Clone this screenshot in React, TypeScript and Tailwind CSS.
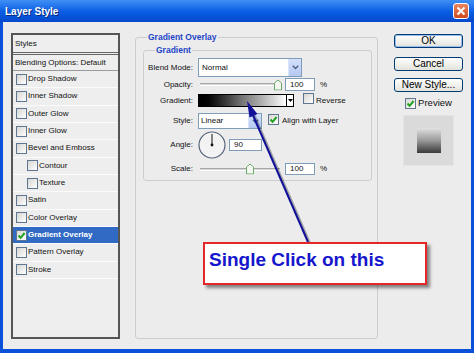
import React from "react";

const styleRows = [
  { label: "Drop Shadow" },
  { label: "Inner Shadow" },
  { label: "Outer Glow" },
  { label: "Inner Glow" },
  { label: "Bevel and Emboss" },
  { label: "Contour", indent: true },
  { label: "Texture", indent: true },
  { label: "Satin" },
  { label: "Color Overlay" },
  { label: "Gradient Overlay", selected: true },
  { label: "Pattern Overlay" },
  { label: "Stroke" },
];

function Check({ checked = false }: { checked?: boolean }) {
  return (
    <span className="inline-flex w-[11px] h-[11px] shrink-0 border border-[#5f7590] bg-gradient-to-br from-[#d6d6d2] to-white items-center justify-center">
      {checked && (
        <svg width="9" height="9" viewBox="0 0 9 9">
          <path d="M1.5 4.5 L3.6 6.8 L7.6 2" stroke="#22a322" strokeWidth="2" fill="none" />
        </svg>
      )}
    </span>
  );
}

function Chevron() {
  return (
    <span className="flex w-[13px] h-full items-center justify-center bg-gradient-to-b from-[#d4e0fb] to-[#b6c9f4] border-l border-[#dbe5fa]">
      <svg width="7" height="5" viewBox="0 0 7 5">
        <path d="M0.8 0.8 L3.5 3.6 L6.2 0.8" stroke="#4d6185" strokeWidth="1.4" fill="none" />
      </svg>
    </span>
  );
}

function Slider({ value }: { value: number }) {
  return (
    <div className="relative w-[84px] h-full flex items-center px-[2px]">
      <div className="flex-1 h-[3px] border-t border-[#a7a7a7] border-b border-b-white bg-[#d8d8d8]" />
      <svg className="absolute top-1/2 -translate-y-1/2" style={{ left: value }} width="8" height="11" viewBox="0 0 8 11">
        <path d="M0.5 10.5 V3.5 L4 0.5 L7.5 3.5 V10.5 Z" fill="#f4f8f0" stroke="#6aa76a" />
      </svg>
    </div>
  );
}

function Field({ value, w }: { value: string; w: string }) {
  return (
    <div className={`${w} h-full border border-[#7f9db9] bg-white flex items-center pl-[4px] text-[8px] leading-none`}>{value}</div>
  );
}

function Row({ label, className, children }: { label: string; className: string; children: React.ReactNode }) {
  return (
    <div className={`flex items-center ${className}`}>
      <span className="w-[49px] mr-[5px] text-right">{label}</span>
      {children}
    </div>
  );
}

function Button({ label, def = false }: { label: string; def?: boolean }) {
  return (
    <div
      className={`w-[69px] h-[14px] rounded-[3px] border border-[#003c74] bg-gradient-to-b from-white to-[#e3e3dd] flex items-center justify-center text-[10px] leading-none text-black ${
        def ? "shadow-[inset_0_0_0_1px_#9bbcf0]" : ""
      }`}
    >
      {label}
    </div>
  );
}

export default function App() {
  return (
    <div className="relative w-[474px] h-[353px] bg-[#0a50d8] flex flex-col overflow-hidden font-['Liberation_Sans',Arial,sans-serif] text-[8px] text-[#111]">
      {/* title bar */}
      <div className="h-[22px] flex items-center bg-gradient-to-b from-[#3f8ff5] via-[#0b5fe4] to-[#0448cc]">
        <span className="pl-[5px] text-white font-bold text-[10px] [text-shadow:1px_1px_0_#0a2a80]">Layer Style</span>
        <div className="ml-auto mr-[5px] w-[16px] h-[16px] rounded-[3px] border border-white bg-gradient-to-b from-[#ec8460] to-[#d0471c] flex items-center justify-center">
          <svg width="10" height="10" viewBox="0 0 10 10">
            <path d="M1.5 1.5 L8.5 8.5 M8.5 1.5 L1.5 8.5" stroke="white" strokeWidth="2" />
          </svg>
        </div>
      </div>

      {/* body */}
      <div className="mx-[3px] h-[327px] bg-[#ececec] flex items-start pl-[8px] pt-[10px]">
        {/* styles list */}
        <div className="mt-[1px] w-[109px] h-[306px] border-2 border-[#555] bg-[#eeeeee] flex flex-col">
          <div className="h-[20px] flex items-center pl-[2px] border-b-[3px] border-double border-[#666]">Styles</div>
          <div className="h-[16px] flex items-center pl-[2px] border-b border-[#9a9a9a]">Blending Options: Default</div>
          {styleRows.map((r) => (
            <div
              key={r.label}
              className={`h-[17.33px] flex items-center gap-[1px] border-b border-[#fbfbfb] ${r.indent ? "pl-[14px]" : "pl-[3px]"} ${
                r.selected ? "bg-[#316ac5] text-white font-bold" : ""
              }`}
            >
              <Check checked={r.selected} />
              <span>{r.label}</span>
            </div>
          ))}
        </div>

        {/* gradient overlay group */}
        <fieldset className="ml-[15px] w-[243px] h-[307px] border border-[#cdcdcd] rounded-[3px]">
          <legend className="ml-[11px] px-[1px] text-[8.5px] leading-[10px] font-bold text-[#1f45c8]">Gradient Overlay</legend>
          <fieldset className="ml-[7px] mt-[3px] w-[229px] border border-[#cdcdcd] rounded-[3px] pb-[5px]">
            <legend className="ml-[11px] px-[1px] text-[8.5px] leading-[10px] font-bold text-[#1f45c8]">Gradient</legend>

            <Row label="Blend Mode:" className="mt-[3px] h-[19px]">
              <div className="w-[104px] h-full border border-[#7f9db9] bg-white flex items-center">
                <span className="pl-[3px] flex-1">Normal</span>
                <Chevron />
              </div>
            </Row>

            <Row label="Opacity:" className="mt-[1px] h-[13px]">
              <Slider value={76} />
              <div className="ml-[3px] h-full flex items-center">
                <Field value="100" w="w-[30px]" />
              </div>
              <span className="ml-[5px]">%</span>
            </Row>

            <Row label="Gradient:" className="mt-[3px] h-[13px]">
              <div className="w-[96px] h-full border border-black flex">
                <div className="flex-1 bg-gradient-to-r from-black via-[#777] to-white" />
                <div className="w-[7px] bg-white border-l border-black flex items-center justify-center">
                  <svg width="5" height="3" viewBox="0 0 5 3">
                    <path d="M0 0 H5 L2.5 3 Z" fill="black" />
                  </svg>
                </div>
              </div>
              <span className="ml-[9px]">
                <Check />
              </span>
              <span className="ml-[2px]">Reverse</span>
            </Row>

            <Row label="Style:" className="mt-[6px] h-[16px]">
              <div className="w-[64px] h-full border border-[#7f9db9] bg-white flex items-center">
                <span className="pl-[2px] flex-1">Linear</span>
                <Chevron />
              </div>
              <span className="ml-[6px]">
                <Check checked />
              </span>
              <span className="ml-[3px]">Align with Layer</span>
            </Row>

            <Row label="Angle:" className="mt-[3px] h-[26px]">
              <svg width="28" height="28" viewBox="0 0 28 28">
                <circle cx="14" cy="14" r="13" fill="#f3f3f3" stroke="#56657c" strokeWidth="1.2" />
                <line x1="14" y1="14" x2="14" y2="3" stroke="#111" strokeWidth="1" />
                <circle cx="14" cy="14" r="1.4" fill="#111" />
              </svg>
              <div className="ml-[3px] h-[12px] flex items-center">
                <Field value="90" w="w-[33px]" />
              </div>
            </Row>

            <Row label="Scale:" className="mt-[5px] h-[12px]">
              <Slider value={48} />
              <div className="ml-[3px] h-full flex items-center">
                <Field value="100" w="w-[30px]" />
              </div>
              <span className="ml-[5px]">%</span>
            </Row>
          </fieldset>
        </fieldset>

        {/* buttons */}
        <div className="ml-[16px] w-[69px] flex flex-col items-center">
          <div className="mt-[2px]">
            <Button label="OK" def />
          </div>
          <div className="mt-[9px]">
            <Button label="Cancel" />
          </div>
          <div className="mt-[7px]">
            <Button label="New Style..." />
          </div>
          <div className="mt-[6px] h-[11px] flex items-center gap-[2px] text-[9.5px]">
            <Check checked />
            <span>Preview</span>
          </div>
          <div className="mt-[6px] w-[51px] h-[51px] bg-[#dadada] border border-[#e4e4e4] flex items-center justify-center">
            <div className="w-[24px] h-[25px] bg-gradient-to-b from-[#e2e2e2] via-[#9a9a9a] to-[#3a3a3a]" />
          </div>
        </div>
      </div>

      {/* annotation arrow */}
      <svg className="absolute left-0 top-0 pointer-events-none" width="474" height="353" viewBox="0 0 474 353">
        <line x1="310" y1="243" x2="254" y2="114" stroke="rgba(0,0,0,0.3)" strokeWidth="2" />
        <line x1="308" y1="242" x2="252" y2="113" stroke="#10109a" strokeWidth="2" />
        <polygon points="247,101 257.5,114 249.5,117.5" fill="#10109a" />
      </svg>

      {/* callout */}
      <div className="absolute left-[203px] top-[242px] w-[224px] h-[43px] bg-white border-2 border-[#e3262a] shadow-[3px_3px_3px_rgba(0,0,0,0.45)] pl-[4px] pt-[6px]">
        <span className="text-[19px] leading-none font-bold text-[#1616cc]">Single Click on this</span>
      </div>
    </div>
  );
}
